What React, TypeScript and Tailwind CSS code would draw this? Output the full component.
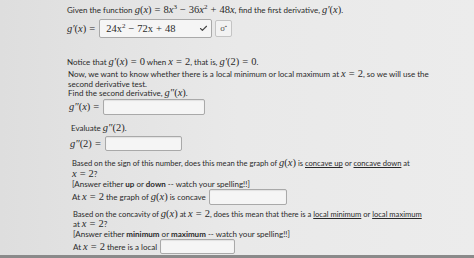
import { Check } from "lucide-react";

const serif = "font-['Liberation_Serif',serif] text-[10.5px] leading-[10px]";

const M = ({ children }: { children: React.ReactNode }) => (
  <span className={`${serif} italic`}>{children}</span>
);

const R = ({ children }: { children: React.ReactNode }) => <span className={serif}>{children}</span>;

const Op = ({ children }: { children: React.ReactNode }) => (
  <span className={`${serif} mx-[3px]`}>{children}</span>
);

const Sup = ({ children }: { children: React.ReactNode }) => (
  <span className="relative -top-[4px] text-[7px] leading-none font-['Liberation_Serif',serif]">{children}</span>
);

function Box({ w, h }: { w: string; h: string }) {
  return (
    <div className={`${w} ${h} bg-[#f5f5f5] border border-[#a9a9a9] rounded-[2px] shadow-[inset_0_1px_1px_rgba(0,0,0,0.08)]`} />
  );
}

const Line = ({ className = "", children }: { className?: string; children: React.ReactNode }) => (
  <div className={`h-[10px] leading-[10px] whitespace-nowrap flex items-center ${className}`}>
    <span>{children}</span>
  </div>
);

const gx = (
  <>
    <M>g</M>
    <R>(</R>
    <M>x</M>
    <R>)</R>
  </>
);

const x2 = (
  <>
    <M>x</M>
    <Op>=</Op>
    <R>2</R>
  </>
);

export default function App() {
  return (
    <div className="w-[474px] h-[258px] overflow-hidden flex flex-col bg-gradient-to-r from-[#dedede] via-[#e9e9e9] to-[#ececec] font-['Lato','Liberation_Sans',sans-serif] text-[8px] text-[#2a2a2a]">
      <div className="flex flex-col pl-[67px] pt-[5px]">
        <Line>
          Given the function {gx}
          <Op>=</Op>
          <R>8</R>
          <M>x</M>
          <Sup>3</Sup>
          <Op>−</Op>
          <R>36</R>
          <M>x</M>
          <Sup>2</Sup>
          <Op>+</Op>
          <R>48</R>
          <M>x</M>, find the first derivative, <M>g′</M>
          <R>(</R>
          <M>x</M>
          <R>)</R>.
        </Line>

        <div className="flex items-center gap-[1px] mt-[4px] h-[19px]">
          <span className="whitespace-nowrap">
            <M>g′</M>
            <R>(</R>
            <M>x</M>
            <R>)</R>
            <Op>=</Op>
          </span>
          <div className="w-[113px] h-[19px] bg-[#f5f5f5] border border-[#a9a9a9] rounded-[2px] flex items-center justify-between pl-[6px] pr-[3px]">
            <span className="whitespace-nowrap">
              <R>24x</R>
              <Sup>2</Sup>
              <Op>−</Op>
              <R>72x</R>
              <Op>+</Op>
              <R>48</R>
            </span>
            <Check className="w-[9px] h-[9px] text-[#444]" strokeWidth={3} />
          </div>
          <div className="ml-[2px] w-[17px] h-[17px] bg-[#f2f2f2] border border-[#c4c4c4] rounded-[2px] flex items-center justify-center">
            <span className="font-['Liberation_Serif',serif] text-[9px] leading-none text-[#555]">
              σ<span className="relative -top-[3px] text-[5px]">▪</span>
            </span>
          </div>
        </div>

        <Line className="mt-[19px]">
          Notice that <M>g′</M>
          <R>(</R>
          <M>x</M>
          <R>)</R>
          <Op>=</Op>
          <R>0</R> when {x2}, that is, <M>g′</M>
          <R>(2)</R>
          <Op>=</Op>
          <R>0</R>.
        </Line>

        <Line className="mt-[2px] ml-[1px]">
          Now, we want to know whether there is a local minimum or local maximum at {x2}, so we will use the
        </Line>
        <Line className="ml-[1px] !h-[9px]">second derivative test.</Line>
        <Line className="ml-[1px]">
          Find the second derivative, <M>g″</M>
          <R>(</R>
          <M>x</M>
          <R>)</R>.
        </Line>

        <div className="flex items-center gap-[1px] mt-[1px] ml-[2px]">
          <span className="whitespace-nowrap">
            <M>g″</M>
            <R>(</R>
            <M>x</M>
            <R>)</R>
            <Op>=</Op>
          </span>
          <Box w="w-[102px]" h="h-[16px]" />
        </div>

        <Line className="mt-[8px] ml-[4px]">
          Evaluate <M>g″</M>
          <R>(2)</R>.
        </Line>

        <div className="flex items-center gap-[1px] mt-[3px] ml-[3px]">
          <span className="whitespace-nowrap">
            <M>g″</M>
            <R>(2)</R>
            <Op>=</Op>
          </span>
          <Box w="w-[77px]" h="h-[15px]" />
        </div>

        <Line className="mt-[7px] ml-[5px] text-[7.6px]">
          Based on the sign of this number, does this mean the graph of {gx} is{" "}
          <span className="underline underline-offset-1">concave up</span> or{" "}
          <span className="underline underline-offset-1">concave down</span> at
        </Line>
        <Line className="ml-[5px] !h-[11px]">
          {x2}?
        </Line>
        <Line className="ml-[5px]">
          [Answer either <b>up</b> or <b>down</b> -- watch your spelling!!]
        </Line>

        <div className="flex items-center gap-[3px] ml-[5px]">
          <span className="whitespace-nowrap">
            At {x2} the graph of {gx} is concave
          </span>
          <Box w="w-[78px]" h="h-[16px]" />
        </div>

        <Line className="mt-[4px] ml-[6px] text-[7.6px]">
          Based on the concavity of {gx} at {x2}, does this mean that there is a{" "}
          <span className="underline underline-offset-1">local minimum</span> or{" "}
          <span className="underline underline-offset-1">local maximum</span>
        </Line>
        <Line className="ml-[6px]">
          at {x2}?
        </Line>
        <Line className="ml-[6px]">
          [Answer either <b>minimum</b> or <b>maximum</b> -- watch your spelling!!]
        </Line>

        <div className="flex items-center gap-[3px] ml-[6px]">
          <span className="whitespace-nowrap">
            At {x2} there is a local
          </span>
          <Box w="w-[75px]" h="h-[15px]" />
        </div>
      </div>
      <div className="mt-auto h-[3px] bg-[#8a8a8a]" />
    </div>
  );
}
